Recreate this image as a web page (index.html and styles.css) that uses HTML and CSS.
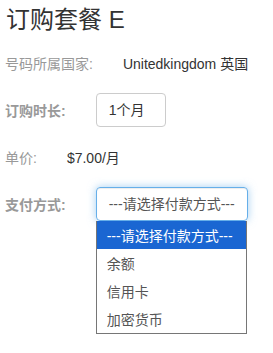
FILE: index.html
```html
<!DOCTYPE html>
<html lang="zh-CN">
<head>
  <meta charset="UTF-8">
  <meta name="viewport" content="width=device-width, initial-scale=1.0">
  <title>订购套餐 E</title>
  <link rel="stylesheet" href="styles.css">
</head>
<body>
<div class="order">
  <h1 class="order-title">订购套餐 E</h1>

  <div class="row">
    <span class="label">号码所属国家:</span>
    <span class="value">Unitedkingdom 英国</span>
  </div>

  <div class="row">
    <span class="label label-bold">订购时长:</span>
    <div class="box">1个月</div>
  </div>

  <div class="row">
    <span class="label">单价:</span>
    <span class="value">$7.00/月</span>
  </div>

  <div class="row">
    <span class="label label-bold">支付方式:</span>
    <div class="select-wrap">
      <div class="box box-select">---请选择付款方式---</div>
      <!-- 打开的下拉列表 -->
      <ul class="dropdown">
        <li class="active">---请选择付款方式---</li>
        <li>余额</li>
        <li>信用卡</li>
        <li>加密货币</li>
      </ul>
    </div>
  </div>
</div>
</body>
</html>
```

FILE: styles.css
```css
* {
  margin: 0;
  padding: 0;
  box-sizing: border-box;
}

html,
body {
  min-height: 100%;
}

body {
  background: #fff;
  color: #333;
  font-family: "Liberation Sans", Arial, "Noto Sans CJK SC", sans-serif;
  font-size: 14px;
}

.order {
  padding: 0 5px;
  min-height: 353px;
}

.order-title {
  font-size: 24px;
  font-weight: normal;
  line-height: 34px;
  margin: 3px 0 9px 1px;
  color: #333;
}

.row {
  display: flex;
  align-items: center;
  height: 34px;
  margin-bottom: 13px;
}

.label {
  color: #999;
  margin-right: 30px;
}

.label-bold {
  font-weight: bold;
}

.value {
  color: #333;
}

.box {
  height: 34px;
  width: 70px;
  border: 1px solid #ccc;
  border-radius: 4px;
  padding: 0 12px;
  line-height: 32px;
  color: #333;
}

.select-wrap {
  position: relative;
}

.box-select {
  width: 152px;
  color: #555;
  border-color: #66afe9;
  box-shadow: inset 0 1px 1px rgba(0, 0, 0, 0.075), 0 0 8px rgba(102, 175, 233, 0.6);
  white-space: nowrap;
}

.dropdown {
  position: absolute;
  top: 34px;
  left: 0;
  width: 151px;
  list-style: none;
  background: #fff;
  border: 1px solid #767676;
  border-top: none;
  z-index: 2;
}

.dropdown li {
  height: 28px;
  line-height: 24px;
  padding: 3px 10px 1px;
  color: #555;
  white-space: nowrap;
}

.dropdown li.active {
  background: #1a66d2;
  color: #fff;
}
```
